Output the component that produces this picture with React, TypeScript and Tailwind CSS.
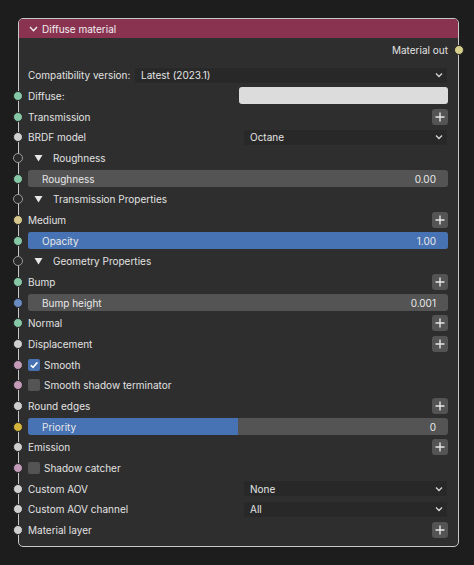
import React from "react";

const GREEN = "#86c8a6";
const WHITE = "#cfcfcf";
const PINK = "#c49ab9";
const BLUE = "#6a8ac2";

function Socket({ color, hollow, right }: { color?: string; hollow?: boolean; right?: boolean }) {
  const pos = right ? "right-[-6px]" : "left-[-6px]";
  if (hollow) {
    return (
      <span className={`absolute ${pos} top-1/2 -translate-y-1/2 w-[10px] h-[10px] rounded-full border border-[#9a9a9a] bg-[#2a2a2a]`} />
    );
  }
  return (
    <span
      className={`absolute ${pos} top-1/2 -translate-y-1/2 w-[10px] h-[10px] rounded-full border border-[#262626]`}
      style={{ backgroundColor: color }}
    />
  );
}

function Row({ socket, hollow, children }: { socket?: string; hollow?: boolean; children?: React.ReactNode }) {
  return (
    <div className="relative h-[20.68px] flex items-center pl-[9px] pr-[10px] whitespace-nowrap">
      {(socket || hollow) && <Socket color={socket} hollow={hollow} />}
      {children}
    </div>
  );
}

function Plus() {
  return (
    <span className="ml-auto w-[16px] h-[16px] rounded-[3px] bg-[#545454] flex items-center justify-center">
      <svg width="10" height="10" viewBox="0 0 10 10">
        <path d="M5 0.5V9.5M0.5 5H9.5" stroke="#e6e6e6" strokeWidth="1.4" />
      </svg>
    </span>
  );
}

function Chevron() {
  return (
    <svg width="8" height="6" viewBox="0 0 8 6" className="ml-auto">
      <path d="M1 1.5L4 4.5L7 1.5" stroke="#d8d8d8" strokeWidth="1.3" fill="none" />
    </svg>
  );
}

function Dropdown({ text, w }: { text: string; w: string }) {
  return (
    <div className={`ml-auto ${w} h-[17px] rounded-[3px] bg-[#282828] border border-[#2f2f2f] flex items-center pl-[6px] pr-[4px] text-[#e4e4e4]`}>
      <span>{text}</span>
      <Chevron />
    </div>
  );
}

function Label({ children }: { children: React.ReactNode }) {
  return <span className="text-[#e2e2e2] shrink-0">{children}</span>;
}

function Panel({ text }: { text: string }) {
  return (
    <Row hollow>
      <svg width="9" height="8" viewBox="0 0 9 8" className="ml-[6px]">
        <path d="M0.5 1H8.5L4.5 7.5Z" fill="#e8e8e8" />
      </svg>
      <span className="ml-[10px] text-[#e2e2e2]">{text}</span>
    </Row>
  );
}

function Slider({ label, value, frac, socket }: { label: string; value: string; frac: number; socket?: string }) {
  return (
    <Row socket={socket}>
      <div className="relative flex-1 h-[17px] rounded-[3px] bg-[#545454] overflow-hidden flex items-center">
        {frac > 0 && <div className="absolute left-0 top-0 bottom-0 bg-[#4772b3]" style={{ width: `${frac * 100}%` }} />}
        <span className="relative ml-[14px] text-[#e8e8e8]">{label}</span>
        <span className="relative ml-auto mr-[12px] text-[#e8e8e8]">{value}</span>
      </div>
    </Row>
  );
}

function Check({ checked, label }: { checked: boolean; label: string }) {
  return (
    <>
      <span className={`w-[12px] h-[12px] rounded-[2px] flex items-center justify-center ${checked ? "bg-[#4772b3]" : "bg-[#545454]"}`}>
        {checked && (
          <svg width="10" height="10" viewBox="0 0 10 10">
            <path d="M1.8 5.2L4 7.4L8.4 2.4" stroke="#fff" strokeWidth="1.6" fill="none" />
          </svg>
        )}
      </span>
      <span className="ml-[4px] text-[#e2e2e2]">{label}</span>
    </>
  );
}

export default function App() {
  return (
    <div className="w-[474px] h-[565px] bg-[#1d1d1d] pt-[18px] pl-[18px] font-['Inter','Noto_Sans',sans-serif] text-[10px] leading-none">
      <div className="w-[441px] rounded-[5px] border border-[#c8c8c8] bg-[#2e2e2e]">
        <div className="h-[19px] rounded-t-[4px] bg-[#8a3350] flex items-center pl-[10px] text-[#f0f0f0]">
          <svg width="9" height="6" viewBox="0 0 9 6">
            <path d="M1 1L4.5 4.8L8 1" stroke="#f0f0f0" strokeWidth="1.3" fill="none" />
          </svg>
          <span className="ml-[4px]">Diffuse material</span>
        </div>
        <div className="pt-[2px] pb-[6px]">
          <div className="relative h-[20.68px] flex items-center justify-end pr-[10px]">
            <span className="text-[#e2e2e2]">Material out</span>
            <Socket color="#d6cf8b" right />
          </div>
          <div className="h-[4.3px]" />
          <Row>
            <Label>Compatibility version:</Label>
            <Dropdown text="Latest (2023.1)" w="w-[314px]" />
          </Row>
          <Row socket={GREEN}>
            <Label>Diffuse:</Label>
            <span className="ml-auto w-[209px] h-[17px] rounded-[3px] bg-[#dcdcdc]" />
          </Row>
          <Row socket={GREEN}>
            <Label>Transmission</Label>
            <Plus />
          </Row>
          <Row socket={WHITE}>
            <Label>BRDF model</Label>
            <Dropdown text="Octane" w="w-[205px]" />
          </Row>
          <Panel text="Roughness" />
          <Slider label="Roughness" value="0.00" frac={0} socket={GREEN} />
          <Panel text="Transmission Properties" />
          <Row socket="#d6c78c">
            <Label>Medium</Label>
            <Plus />
          </Row>
          <Slider label="Opacity" value="1.00" frac={1} socket={GREEN} />
          <Panel text="Geometry Properties" />
          <Row socket={GREEN}>
            <Label>Bump</Label>
            <Plus />
          </Row>
          <Slider label="Bump height" value="0.001" frac={0} socket={BLUE} />
          <Row socket={GREEN}>
            <Label>Normal</Label>
            <Plus />
          </Row>
          <Row socket={WHITE}>
            <Label>Displacement</Label>
            <Plus />
          </Row>
          <Row socket={PINK}>
            <Check checked label="Smooth" />
          </Row>
          <Row socket={PINK}>
            <Check checked={false} label="Smooth shadow terminator" />
          </Row>
          <Row socket={WHITE}>
            <Label>Round edges</Label>
            <Plus />
          </Row>
          <Slider label="Priority" value="0" frac={0.5} socket="#d4b43c" />
          <Row socket={WHITE}>
            <Label>Emission</Label>
            <Plus />
          </Row>
          <Row socket={PINK}>
            <Check checked={false} label="Shadow catcher" />
          </Row>
          <Row socket={WHITE}>
            <Label>Custom AOV</Label>
            <Dropdown text="None" w="w-[205px]" />
          </Row>
          <Row socket={WHITE}>
            <Label>Custom AOV channel</Label>
            <Dropdown text="All" w="w-[205px]" />
          </Row>
          <Row socket={WHITE}>
            <Label>Material layer</Label>
            <Plus />
          </Row>
        </div>
      </div>
    </div>
  );
}
